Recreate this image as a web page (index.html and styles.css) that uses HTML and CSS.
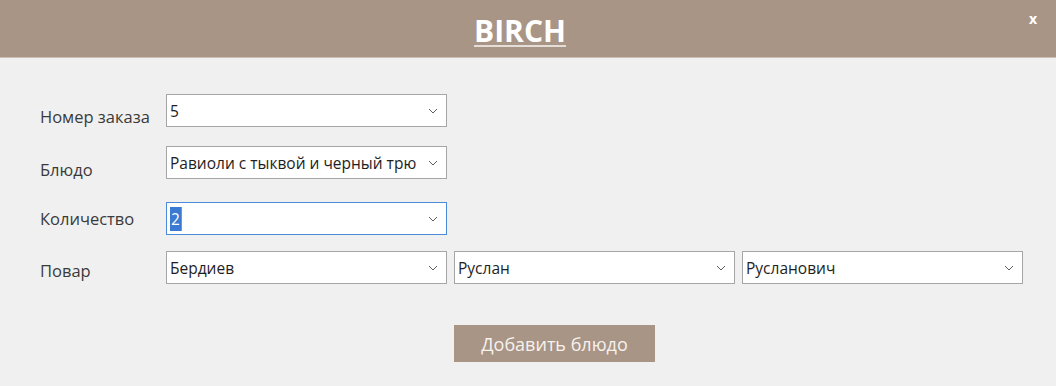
FILE: index.html
```html
<!DOCTYPE html>
<html>
<head>
    <meta charset="UTF-8">
    <title>BIRCH</title>
    <link rel="stylesheet" href="styles.css">
</head>
<body>
    <div class="window">
        <div class="header">
            <span class="title">BIRCH</span>
            <span class="close">x</span>
        </div>

        <div class="form">
            <div class="row row-order">
                <div class="label">Номер заказа</div>
                <div class="combo">
                    <span class="value">5</span>
                    <svg class="chevron" width="10" height="6" viewBox="0 0 10 6"><path d="M1 1 L5 5 L9 1" fill="none" stroke="#5f5f5f" stroke-width="1"/></svg>
                </div>
            </div>

            <div class="row row-dish">
                <div class="label">Блюдо</div>
                <div class="combo">
                    <span class="value">Равиоли с тыквой и черный трю</span>
                    <svg class="chevron" width="10" height="6" viewBox="0 0 10 6"><path d="M1 1 L5 5 L9 1" fill="none" stroke="#5f5f5f" stroke-width="1"/></svg>
                </div>
            </div>

            <div class="row row-count">
                <div class="label">Количество</div>
                <div class="combo combo-focus">
                    <span class="value"><span class="selected">2</span><span class="caret"></span></span>
                    <svg class="chevron" width="10" height="6" viewBox="0 0 10 6"><path d="M1 1 L5 5 L9 1" fill="none" stroke="#5f5f5f" stroke-width="1"/></svg>
                </div>
            </div>

            <div class="row row-cook">
                <div class="label">Повар</div>
                <div class="combo-group">
                    <div class="combo">
                        <span class="value">Бердиев</span>
                        <svg class="chevron" width="10" height="6" viewBox="0 0 10 6"><path d="M1 1 L5 5 L9 1" fill="none" stroke="#5f5f5f" stroke-width="1"/></svg>
                    </div>
                    <div class="combo">
                        <span class="value">Руслан</span>
                        <svg class="chevron" width="10" height="6" viewBox="0 0 10 6"><path d="M1 1 L5 5 L9 1" fill="none" stroke="#5f5f5f" stroke-width="1"/></svg>
                    </div>
                    <div class="combo">
                        <span class="value">Русланович</span>
                        <svg class="chevron" width="10" height="6" viewBox="0 0 10 6"><path d="M1 1 L5 5 L9 1" fill="none" stroke="#5f5f5f" stroke-width="1"/></svg>
                    </div>
                </div>
            </div>

            <button class="add-button">Добавить блюдо</button>
        </div>
    </div>
</body>
</html>
```

FILE: styles.css
```css
:root {
    --ui-font: 'Open Sans', 'Noto Sans', 'Liberation Sans', sans-serif;
    --birch: #a99586;
}

* {
    margin: 0;
    padding: 0;
    box-sizing: border-box;
}

body {
    width: 1056px;
    height: 386px;
    overflow: hidden;
    background-color: #f0f0f0;
    font-family: var(--ui-font);
    color: #333;
}

/* шапка */
.header {
    position: relative;
    height: 58px;
    background: var(--birch);
    border-bottom: 1px solid #cdbfb3;
    display: flex;
    justify-content: center;
    padding: 16px 16px 0 0;
}

.title {
    font-size: 30px;
    font-weight: 700;
    line-height: 30px;
    color: #fff;
    text-decoration: underline;
    text-decoration-color: #e4ddd8;
    text-decoration-thickness: 2px;
    text-underline-offset: 3px;
}

.close {
    position: absolute;
    top: 9px;
    right: 19px;
    font-size: 14px;
    font-weight: 700;
    color: #fff;
}

/* форма */
.form {
    padding: 36px 0 0 40px;
}

.row {
    display: flex;
    align-items: flex-start;
}

.row-dish { margin-top: 18px; }
.row-count { margin-top: 21px; }
.row-cook { margin-top: 16px; }

.label {
    width: 126px;
    font-size: 16.5px;
    line-height: 22px;
    color: #3a3a3a;
}

.row-order .label { padding-top: 12px; }
.row-dish .label { padding-top: 13px; }
.row-count .label { padding-top: 6px; }
.row-cook .label { padding-top: 9px; }

.combo {
    width: 281px;
    height: 33px;
    background: #fff;
    border: 1px solid #a6a6a6;
    display: flex;
    align-items: center;
    justify-content: space-between;
    padding: 0 8px 0 3px;
    font-size: 15.5px;
    color: #1e1e1e;
}

.combo-focus {
    border-color: #4a8ad8;
}

.combo-group {
    display: flex;
    gap: 7px;
}

.value {
    display: flex;
    align-items: center;
    white-space: nowrap;
    overflow: hidden;
}

.selected {
    background: #3b7ad2;
    color: #fff;
    line-height: 24px;
    padding: 0 1px;
}

.caret {
    width: 1px;
    height: 24px;
    background: #c9824a;
}

.chevron {
    flex: none;
}

.add-button {
    display: block;
    margin: 41px 0 0 414px;
    width: 201px;
    height: 37px;
    border: none;
    background: var(--birch);
    color: #f6f2ee;
    font-family: var(--ui-font);
    font-size: 18px;
    cursor: pointer;
}
```
